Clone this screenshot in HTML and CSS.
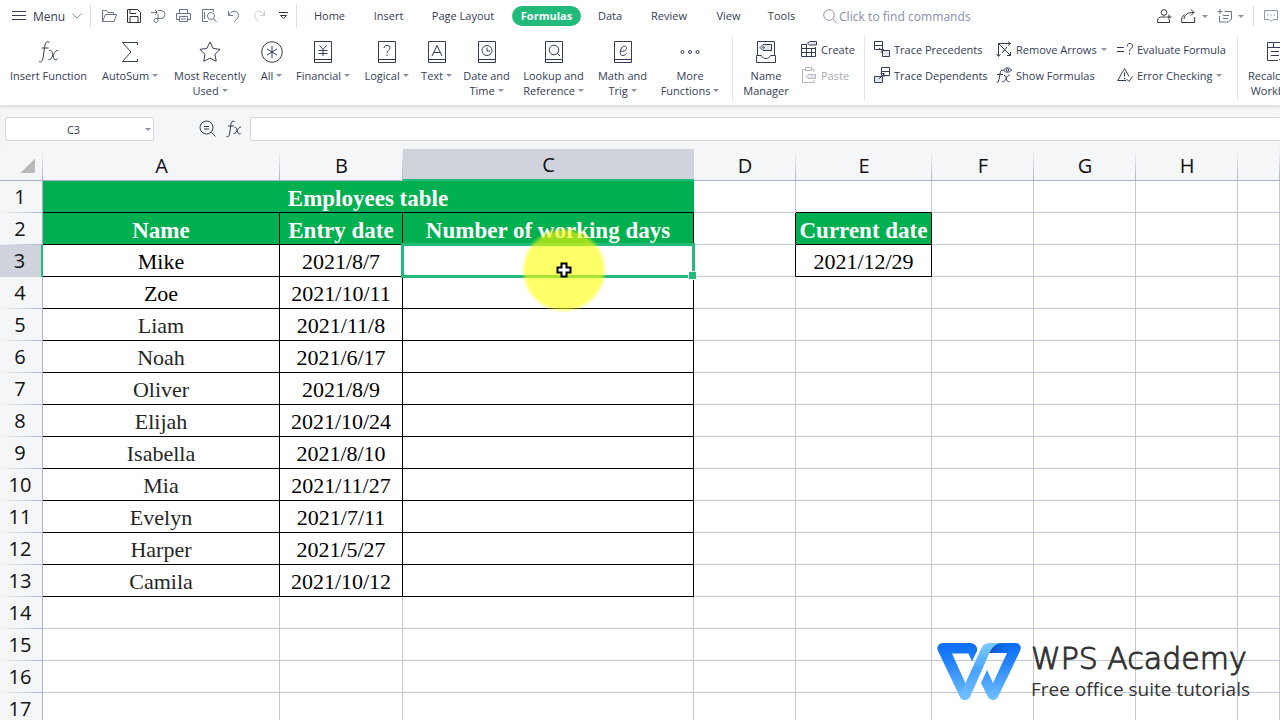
FILE: index.html
```html
<!DOCTYPE html>
<html lang="en">
  <head>
    <meta charset="UTF-8" />
    <meta name="viewport" content="width=device-width, initial-scale=1.0" />
    <title>Employees table</title>
    <link rel="stylesheet" href="styles.css">
  </head>
  <body>
    <header class="menubar">
      <button class="menu-btn">
        <svg width="14" height="12" viewBox="0 0 14 12"><path d="M0 1.500h14M0 5.500h14M0 9.500h14" /></svg>
        Menu
        <svg class="muted" width="10" height="6" viewBox="0 0 10 6"><path d="M.5.5 5 5 9.500.5" /></svg>
      </button>
      <div class="quick-access">
        <button aria-label="Open"><svg class="slate" width="16" height="14" viewBox="0 0 16 14"><path d="M1.500 12.500V1.500h4l1.500 2h5.500v2M1.500 12.500l3-7h11l-2.500 7z" /></svg></button>
        <button aria-label="Save"><svg class="dark" width="14" height="14" viewBox="0 0 14 14"><path d="M.5.5h10l3 3v10H.5zM3 13V7.500h8V13M3 1v3.500h6" /></svg></button>
        <button aria-label="Export to PDF"><svg class="slate" width="15" height="14" viewBox="0 0 15 14"><path d="M0 3.500h6M4 1l2.500 2.500L4 6M7 1.500h3a4 4 0 0 1 0 8H5a2 2 0 1 0 2 2V5" /></svg></button>
        <button aria-label="Print"><svg class="slate" width="15" height="14" viewBox="0 0 15 14"><path d="M3.500 4V.5h8V4M3 10.500H.5v-6h14v6H12M3.500 7.500h8v5h-8zM5 10h5" /></svg></button>
        <button aria-label="Print preview"><svg class="slate" width="16" height="14" viewBox="0 0 16 14"><path d="M7 12.500H1.500V.5h11v2M3.500 3v7" /><circle cx="10" cy="7" r="3.500" /><path d="m12.500 9.500 3 3.500" /></svg></button>
        <button aria-label="Undo"><svg class="slate" width="14" height="14" viewBox="0 0 14 14"><path d="M1.500 2v4.500H6M1.500 6.500C4 2 8 1.500 10 3c3 3 1 7-3 9.500" /></svg></button>
        <button aria-label="Redo"><svg class="faint" width="14" height="14" viewBox="0 0 14 14"><path d="M12.500 2v4.500H8M12.500 6.500C10 2 6 1.500 4 3c-3 3-1 7 3 9.500" /></svg></button>
        <button aria-label="Customize"><svg class="dark" width="9" height="8" viewBox="0 0 9 8"><path d="M0 .5h9M1.500 3.500h6l-3 3z" /></svg></button>
      </div>
      <nav class="tabs">
        <a href="#">Home</a>
        <a href="#">Insert</a>
        <a href="#">Page Layout</a>
        <a href="#" class="active">Formulas</a>
        <a href="#">Data</a>
        <a href="#">Review</a>
        <a href="#">View</a>
        <a href="#">Tools</a>
      </nav>
      <div class="search">
        <svg class="muted" width="15" height="15" viewBox="0 0 15 15"><circle cx="6" cy="6" r="5.300" /><path d="m10 10 4 4.500" /></svg>
        <input type="text" aria-label="Find commands" placeholder="Click to find commands" />
      </div>
      <div class="account">
        <button aria-label="Collaborate"><svg class="dark" width="15" height="14" viewBox="0 0 15 14"><circle cx="7" cy="3.500" r="2.800" /><path d="M10 13.500H.7V11c0-2 2-3 4-3h4M8 13.500h4.500v-2.500M12 5.500v5M9.500 8h5" /></svg></button>
        <button aria-label="Share"><svg class="dark" width="16" height="14" viewBox="0 0 16 14"><path d="M3.500 5.500.7 9v4.500h13V8M3 10c1-5 4-6.500 10-6.500M10 .5l3 3-3 3" /></svg><span class="caret"></span></button>
        <button aria-label="Insert note"><svg class="slate" width="16" height="14" viewBox="0 0 16 14"><path d="M3 0v5M.5 2.500h5M7.500 2.500h7V10l-3 3H2.500V7M6 6.500h6M6 9.500h5" /></svg><span class="caret"></span></button>
        <button class="comment-btn" aria-label="Comments"><svg class="muted" width="14" height="13" viewBox="0 0 14 13"><path d="M.5.5h13v9H9l-2 2-2-2H.5zM3 5h1.500M6.300 5h1.500M9.600 5h1.500" /></svg></button>
      </div>
    </header>

    <section class="ribbon">
      <div class="group functions">
        <button class="tool"><svg width="22" height="22" viewBox="0 0 22 22"><path d="M11.500 1.500C9 0 7.500 1 7 4L5 17c-.5 3.500-2 4.500-4 3.500M3.500 7h7M11 10c2-1.500 3 0 3.500 2.500l1 4c.5 2.500 2 3 4 1.500M20 9.500c-2 0-3 1-4 3l-2 3.500c-1 2-2 2.500-3.500 2.500" /></svg><span>Insert Function</span></button>
        <button class="tool"><svg width="18" height="22" viewBox="0 0 18 22"><path d="M16.500 4V1.500H1.500L10 11 1.500 20.500h15V18" /></svg><span>AutoSum <i class="caret"></i></span></button>
        <button class="tool"><svg width="22" height="22" viewBox="0 0 22 22"><path d="m11 1 3.100 6.400 7 1-5.100 4.900 1.200 7L11 17l-6.200 3.300 1.200-7L.9 8.400l7-1z" /></svg><span>Most Recently<br>Used <i class="caret"></i></span></button>
        <button class="tool"><svg width="22" height="22" viewBox="0 0 22 22"><circle cx="11" cy="11" r="10.300" /><path d="M11 5v12M6 8l10 6M16 8 6 14" /></svg><span>All <i class="caret"></i></span></button>
        <button class="tool"><svg width="18" height="22" viewBox="0 0 18 22"><path d="M.5.5h17v21H.5zM.5 18.500h17M5.500 4.500l3.500 4 3.500-4M9 8.500V15M4.500 9.500h9M4.500 12.500h9" /></svg><span>Financial <i class="caret"></i></span></button>
        <button class="tool"><svg width="18" height="22" viewBox="0 0 18 22"><path d="M.5.5h17v21H.5zM.5 18.500h17M6 7c0-3.500 6-3.500 6 0 0 2-3 2.500-3 5M9 13.500V15" /></svg><span>Logical <i class="caret"></i></span></button>
        <button class="tool"><svg width="18" height="22" viewBox="0 0 18 22"><path d="M.5.5h17v21H.5zM.5 18.500h17M4 15 9 4.500 14 15M5.500 11.500h7" /></svg><span>Text <i class="caret"></i></span></button>
        <button class="tool"><svg width="18" height="22" viewBox="0 0 18 22"><path d="M.5.5h17v21H.5zM.5 18.500h17M9 6.500V10h3" /><circle cx="9" cy="9.500" r="5" /></svg><span>Date and<br>Time <i class="caret"></i></span></button>
        <button class="tool"><svg width="18" height="22" viewBox="0 0 18 22"><path d="M.5.5h17v21H.5zM.5 18.500h17M12 12l3 3" /><circle cx="9" cy="9" r="4.800" /></svg><span>Lookup and<br>Reference <i class="caret"></i></span></button>
        <button class="tool"><svg width="18" height="22" viewBox="0 0 18 22"><path d="M.5.5h17v21H.5zM.5 18.500h17M6 10c4 1 7-1 6.500-3.500-.5-2-4-2-5.500 1.500-1.500 4-.5 6.500 2 6.500 1.500 0 2.500-1 3.500-2" /></svg><span>Math and<br>Trig <i class="caret"></i></span></button>
        <button class="tool"><svg width="20" height="22" viewBox="0 0 20 22"><circle cx="2.500" cy="11" r="1.500" /><circle cx="10" cy="11" r="1.500" /><circle cx="17.500" cy="11" r="1.500" /></svg><span>More<br>Functions <i class="caret"></i></span></button>
      </div>

      <div class="group names">
        <button class="tool"><svg width="20" height="22" viewBox="0 0 20 22"><path d="M1.500 14.500V.5h17v14M.5 14.500h5c1 4 8 4 9 0h5v7H.5z" /><path class="fill" d="M7 3.500h8.500v6H7l-3-3z" /><circle cx="7.500" cy="6.500" r=".8" /></svg><span>Name<br>Manager</span></button>
        <div class="stack">
          <button class="mini"><svg width="16" height="16" viewBox="0 0 16 16"><path d="M6 3.500H.5v12h14V6M.5 7.500h14M.5 11.500h14M5.500 3.500v12M10.500 7.500v8" /><path class="fill" d="M8.500.5h7v3.500h-7l-2-1.700z" /></svg>Create</button>
          <button class="mini" disabled><svg width="16" height="16" viewBox="0 0 16 16"><path d="M4 2.500H1.500v13H13V13M13 5V2.500h-2.500M4.500.5h6v3h-6z" /><path class="fill" d="M7 7.500h7.500v4H7L5 9.500z" /></svg>Paste</button>
        </div>
      </div>

      <div class="group audit">
        <div class="stack">
          <button class="mini"><svg width="16" height="16" viewBox="0 0 16 16"><path d="M.5.5h8v8h-8zM.5 4.500h8M5 7l4.500 4M9.500 8v3H6.500" /><path class="fill" d="M8.500 9.500h7v6h-7z" /></svg>Trace Precedents</button>
          <button class="mini"><svg width="16" height="16" viewBox="0 0 16 16"><path class="fill" d="M.5 9.500h8v6h-8z" /><path d="M7.500.5h8v8h-8zM7.500 4.500h8M5 12l5-5M6.500 6.500H10V10" /></svg>Trace Dependents</button>
        </div>
        <div class="stack">
          <button class="mini"><svg width="16" height="16" viewBox="0 0 16 16"><path d="M2.500 15V2.500H14M12 .5l2.500 2L12 4.500M.5 13l2 2.500 2-2.500M2.500 2.500l12 12M14.500 11v3.500H11M6 12l5-6" /></svg>Remove Arrows <i class="caret"></i></button>
          <button class="mini"><svg width="16" height="16" viewBox="0 0 16 16"><path d="M7 3.500C5 2.500 4.500 4 4.200 6L3 12.500c-.4 2.500-1 3-2.500 2.500M1 7.500h6M8 8.500c2 0 2 1.500 2.500 3.500s1 3 3 2.500M14 8c-2 0-3 2-4 3.500s-1.500 3.500-4 3.500M7.500 3c2-3 6-3 8 0-2 3-6 3-8 0z" /><circle cx="11.500" cy="3" r="1.300" /></svg>Show Formulas</button>
        </div>
        <div class="stack">
          <button class="mini"><svg width="16" height="16" viewBox="0 0 16 16"><path d="M0 6.500h7M0 10.500h7M10 5.500c0-4 5.500-4 5.500-.5 0 2.500-3 2.500-3 5.500M12.500 12v1.500" /></svg>Evaluate Formula</button>
          <button class="mini"><svg width="16" height="16" viewBox="0 0 16 16"><path d="M9 13.500H.7L7.500 1.500l4.500 8M7.500 5.500v4M7.500 11v1.300M9 11.500l3 3 3.500-5" /></svg>Error Checking <i class="caret"></i></button>
        </div>
      </div>

      <div class="group calc">
        <button class="tool"><svg width="22" height="22" viewBox="0 0 22 22"><path d="M12 19.500H1.500V1.500h19V12M1.500 6.500h19M7.500 1.500v5M5 10.500h8M5 14.500h8M13 18c2 3 6 3 8-1" /></svg><span>Recalculate<br>Workbook</span></button>
      </div>
    </section>

    <section class="formula-bar">
      <div class="name-box">
        <input type="text" aria-label="Name box" value="C3" />
        <i class="caret"></i>
      </div>
      <div class="formula-tools">
        <button aria-label="Zoom"><svg width="18" height="18" viewBox="0 0 18 18"><circle cx="7.500" cy="7.500" r="6.500" /><path d="M5 6.500h5M5 9h5M12.300 12.300l4.200 4.200" /></svg></button>
        <button aria-label="Insert function"><svg width="16" height="18" viewBox="0 0 16 18"><path d="M8.500 1.500c-2-1-3 0-3.400 2L3.500 14c-.4 2.500-1.300 3-3 2.500M2 6h6M8.500 7.500c1.500-.5 2 .5 2.500 2.500l.7 2c.5 2 1.500 2.500 3 1.500M15 7c-2 0-2.500 1.500-3.500 3s-1.500 3.500-4 3.500" /></svg></button>
      </div>
      <input class="formula-input" type="text" aria-label="Formula" />
    </section>

    <main class="sheet">
      <table>
        <colgroup>
          <col class="col-index"><col class="col-a"><col class="col-b"><col class="col-c"><col class="col-std"><col class="col-e"><col class="col-std"><col class="col-std"><col class="col-std"><col>
        </colgroup>
        <thead>
          <tr><th class="corner"></th><th>A</th><th>B</th><th class="selected">C</th><th>D</th><th>E</th><th>F</th><th>G</th><th>H</th><th></th></tr>
        </thead>
        <tbody>
          <tr><th>1</th><td colspan="3" class="title">Employees table</td><td></td><td class="above"></td><td></td><td></td><td></td><td></td></tr>
          <tr><th>2</th><td class="head">Name</td><td class="head">Entry date</td><td class="head">Number of working days</td><td class="before"></td><td class="head">Current date</td><td></td><td></td><td></td><td></td></tr>
          <tr><th class="selected">3</th><td class="data">Mike</td><td class="data">2021/8/7</td><td class="data active-cell"><div class="selection"></div><div class="spotlight"><svg width="16" height="16" viewBox="0 0 16 16"><path d="M5.500 1.500h5v4h4v5h-4v4h-5v-4h-4v-5h4z" /></svg></div></td><td class="before"></td><td class="data">2021/12/29</td><td></td><td></td><td></td><td></td></tr>
          <tr><th>4</th><td class="data">Zoe</td><td class="data">2021/10/11</td><td class="data"></td><td></td><td></td><td></td><td></td><td></td><td></td></tr>
          <tr><th>5</th><td class="data soft">Liam</td><td class="data">2021/11/8</td><td class="data"></td><td></td><td></td><td></td><td></td><td></td><td></td></tr>
          <tr><th>6</th><td class="data soft">Noah</td><td class="data">2021/6/17</td><td class="data"></td><td></td><td></td><td></td><td></td><td></td><td></td></tr>
          <tr><th>7</th><td class="data soft">Oliver</td><td class="data">2021/8/9</td><td class="data"></td><td></td><td></td><td></td><td></td><td></td><td></td></tr>
          <tr><th>8</th><td class="data soft">Elijah</td><td class="data">2021/10/24</td><td class="data"></td><td></td><td></td><td></td><td></td><td></td><td></td></tr>
          <tr><th>9</th><td class="data soft">Isabella</td><td class="data">2021/8/10</td><td class="data"></td><td></td><td></td><td></td><td></td><td></td><td></td></tr>
          <tr><th>10</th><td class="data soft">Mia</td><td class="data">2021/11/27</td><td class="data"></td><td></td><td></td><td></td><td></td><td></td><td></td></tr>
          <tr><th>11</th><td class="data soft">Evelyn</td><td class="data">2021/7/11</td><td class="data"></td><td></td><td></td><td></td><td></td><td></td><td></td></tr>
          <tr><th>12</th><td class="data soft">Harper</td><td class="data">2021/5/27</td><td class="data"></td><td></td><td></td><td></td><td></td><td></td><td></td></tr>
          <tr><th>13</th><td class="data soft">Camila</td><td class="data">2021/10/12</td><td class="data"></td><td></td><td></td><td></td><td></td><td></td><td></td></tr>
          <tr><th>14</th><td></td><td></td><td></td><td></td><td></td><td></td><td></td><td></td><td></td></tr>
          <tr><th>15</th><td></td><td></td><td></td><td></td><td></td><td></td><td></td><td></td><td></td></tr>
          <tr><th>16</th><td></td><td></td><td></td><td></td><td></td><td></td><td></td><td></td><td></td></tr>
          <tr><th>17</th><td></td><td></td><td></td><td></td><td></td><td></td><td></td><td></td><td></td></tr>
        </tbody>
      </table>
    </main>

    <div class="watermark">
      <svg width="84" height="58" viewBox="0 0 84 58">
        <defs>
          <linearGradient id="side" x1="0" y1="0" x2="0" y2="1"><stop offset="0" stop-color="#0a6cf5" /><stop offset=".35" stop-color="#2684f8" /><stop offset="1" stop-color="#72c0ff" /></linearGradient>
          <linearGradient id="mid" x1="0" y1="0" x2="0" y2="1"><stop offset="0" stop-color="#7cc8ff" /><stop offset=".5" stop-color="#4aa3fb" /><stop offset="1" stop-color="#74c2ff" /></linearGradient>
          <linearGradient id="shade" x1="0" y1="0" x2="1" y2="0"><stop offset="0" stop-color="#0a4fb5" /><stop offset="1" stop-color="#0a6cf5" stop-opacity="0" /></linearGradient>
        </defs>
        <path fill="url(#side)" d="M6 0h27c5 0 8 4 7 8l-5 10.500-3.500-8H15l14 31L28 57c-2 0-4-1-5-3L1 8C-1 4 2 0 6 0z" />
        <path fill="url(#side)" d="M78 0c5 0 7 4 5 8L61 54c-1 2-3 3-5 3s-4-1-5-3l-7-14 6-13 6 13 14-30H52c2-6 6-10 12-10z" />
        <path fill="url(#shade)" d="M64 0h12v10H52c2-6 6-10 12-10z" />
        <path fill="url(#mid)" d="M65 0H53c-5 0-7 2-9 6L28 41l-5 13c1 2 3 3 5 3s4-1 5-3l19-43c3-7 7-11 13-11z" />
      </svg>
      <div class="wordmark">
        <div class="brand">WPS Academy</div>
        <div class="tagline">Free office suite tutorials</div>
      </div>
    </div>
  </body>
</html>
```
FILE: styles.css
```css
* {
  box-sizing: border-box;
}
body {
  margin: 0;
  height: 100vh;
  display: flex;
  flex-direction: column;
  overflow: hidden;
  position: relative;
  background-color: #fff;
  color: #333d56;
  font-family: "Open Sans", "Noto Sans", sans-serif;
  font-size: 11px;
}
button,
input {
  font: inherit;
  color: inherit;
  background: none;
  border: none;
  padding: 0;
  margin: 0;
}
button {
  display: flex;
  align-items: center;
  justify-content: center;
  white-space: nowrap;
}
svg {
  flex: none;
  fill: none;
  stroke: #333d56;
}
.dark {
  stroke: #333;
}
.slate {
  stroke: #68748f;
}
.muted {
  stroke: #8d97b2;
}
.faint {
  stroke: #ccc;
}
.fill {
  fill: #e3e6ed;
}
.caret {
  display: inline-block;
  flex: none;
  border: 3px solid transparent;
  border-top-color: #8890ae;
  border-bottom: none;
  vertical-align: 3px;
}

/* menu bar */
.menubar {
  height: 32px;
  flex: none;
  display: flex;
  align-items: center;
}
.menu-btn {
  font-size: 12px;
  gap: 7px;
  width: 91px;
  height: 24px;
  padding-left: 4px;
  border-right: 1px solid #ddd;
}
.quick-access {
  display: flex;
  width: 206px;
  height: 24px;
  padding: 0 0 0 5px;
  border-right: 1px solid #ddd;
}
.quick-access button {
  width: 25px;
}
.tabs {
  display: grid;
  grid-template-columns: 61px 57px 92px 75px 52px 66px 53px 53px;
  margin-left: 2px;
}
.tabs a {
  color: inherit;
  text-decoration: none;
  text-align: center;
  line-height: 20px;
}
.tabs .active {
  margin: 0 3px;
  border-radius: 10px;
  background-color: #21ba7a;
  color: #fff;
  font-weight: bold;
}
.search {
  display: flex;
  align-items: center;
  gap: 1px;
  margin-left: 15px;
  width: 180px;
  font-family: "Noto Sans", sans-serif;
  font-size: 12px;
}
.search input {
  flex: 1;
  min-width: 0;
}
.search input::placeholder {
  color: #8d97b2;
}
.account {
  display: flex;
  align-items: center;
  gap: 9px;
  margin-left: auto;
  height: 20px;
}
.account button {
  gap: 5px;
}
.account .comment-btn {
  height: 20px;
  padding: 0 2px 0 10px;
  border-left: 1px solid #ddd;
}

/* ribbon */
.ribbon {
  flex: none;
  display: flex;
  padding: 3px 0;
  height: 73px;
  overflow: hidden;
}
.group {
  flex: none;
  display: flex;
  border-right: 1px solid #e6e7ea;
}
.functions {
  display: grid;
  grid-template-columns: 91px 72px 88px 35px 68px 59px 41px 59px 75px 63px 72px;
  padding: 0 6px 0 3px;
}
.tool {
  flex-direction: column;
  justify-content: flex-start;
  gap: 5px;
  padding-top: 6px;
  line-height: 15px;
}
.names .tool {
  width: 66px;
}
.names {
  width: 132px;
}
.stack {
  display: flex;
  flex-direction: column;
  padding: 1px 0 0 2px;
}
.mini {
  height: 26px;
  justify-content: flex-start;
  gap: 4px;
}
.mini:disabled {
  color: #a6a8ae;
}
.mini:disabled svg {
  stroke: #b4b6bb;
}
.audit {
  display: grid;
  grid-template-columns: 122px 121px 122px;
  padding-left: 7px;
}
.calc {
  border-right: none;
  padding-left: 10px;
}

/* formula bar */
.formula-bar {
  flex: none;
  display: flex;
  align-items: center;
  height: 44px;
  padding-left: 5px;
  padding-top: 4px;
  background-color: #f5f6f8;
  box-shadow: inset 0 3px 3px -1px #d8dadc;
}
.name-box {
  display: flex;
  align-items: center;
  width: 149px;
  height: 24px;
  padding-right: 2px;
  background-color: #fff;
  border: 1px solid #d5d7dc;
  border-radius: 2px;
}
.name-box input {
  flex: 1;
  min-width: 0;
  padding-right: 4px;
  text-align: center;
}
.formula-tools {
  display: flex;
  gap: 9px;
  width: 96px;
  padding-left: 45px;
}
.formula-input {
  flex: 1;
  height: 24px;
  background-color: #fff;
  border: 1px solid #d5d7dc;
  border-right: none;
  border-radius: 2px 0 0 2px;
}

/* sheet */
.sheet {
  flex: 1;
  overflow: hidden;
}
table {
  width: 100%;
  table-layout: fixed;
  border-collapse: separate;
  border-spacing: 0;
}
.col-index {
  width: 43px;
}
.col-a {
  width: 237px;
}
.col-b {
  width: 123px;
}
.col-c {
  width: 291px;
}
.col-e {
  width: 136px;
}
.col-std {
  width: 102px;
}
th,
td {
  height: 32px;
  padding: 0;
  text-align: center;
  white-space: nowrap;
  line-height: 24px;
}
th {
  color: #111;
  font-size: 20px;
  font-weight: normal;
}
thead th {
  padding-top: 2px;
  background: linear-gradient(#f5f6f8, #a9b2cb) right / 1px 100% no-repeat #f5f6f8;
  border-bottom: 1px solid #a9b2cb;
}
tbody th {
  padding-right: 2px;
  background: linear-gradient(90deg, #f5f6f8, #a9b2cb) bottom / 100% 1px no-repeat #f5f6f8;
  border-right: 1px solid #a9b2cb;
}
thead .selected {
  background: #d0d3dc;
  border-bottom: 2px solid #21ba7a;
}
tbody .selected {
  background: #d0d3dc;
  border-right: 2px solid #21ba7a;
}
.corner {
  background-image: linear-gradient(#f5f6f8, #a9b2cb), linear-gradient(135deg, transparent 50%, #b9bbbb 50%);
  background-position: right, 20px 9px;
  background-size: 1px 100%, 15px 15px;
}
td {
  border-right: 1px solid #c2c7da;
  border-bottom: 1px solid #c2c7da;
  color: #000;
  font-family: "Liberation Serif", "Times New Roman", serif;
  font-size: 22px;
}
.title,
.head {
  padding-top: 4px;
  background-color: #00b050;
  border-color: #000;
  color: #fff;
  font-size: 23px;
  font-weight: bold;
}
.title {
  border-right-color: #00b050;
}
.data {
  padding-top: 2px;
  border-color: #000;
}
.soft {
  color: #262626;
}
.above {
  border-bottom-color: #000;
}
.before {
  border-right-color: #000;
}
.active-cell {
  position: relative;
}
.selection {
  position: absolute;
  inset: -2px;
  border: 3px solid #21ba7a;
}
.selection::after {
  content: "";
  position: absolute;
  right: -5px;
  bottom: -5px;
  width: 7px;
  height: 7px;
  background-color: #21ba7a;
  border: 1px solid #fff;
}
.spotlight {
  position: absolute;
  z-index: 1;
  left: 118px;
  top: -18px;
  width: 86px;
  height: 86px;
  display: flex;
  align-items: center;
  justify-content: center;
  border-radius: 50%;
  background: radial-gradient(closest-side, rgba(255, 255, 0, 0.6) 88%, rgba(255, 255, 0, 0));
}
.spotlight svg {
  fill: #fff;
  stroke: #000;
  stroke-width: 2;
}

/* watermark */
.watermark {
  position: absolute;
  right: 30px;
  bottom: 18px;
  display: flex;
  align-items: center;
  gap: 10px;
  color: #333;
}
.watermark svg {
  stroke: none;
}
.brand {
  font-family: "DejaVu Sans", sans-serif;
  font-size: 30px;
  font-weight: 200;
  line-height: 34px;
  -webkit-text-stroke: 1px #333;
}
.tagline {
  font-size: 19px;
  line-height: 26px;
}
```
